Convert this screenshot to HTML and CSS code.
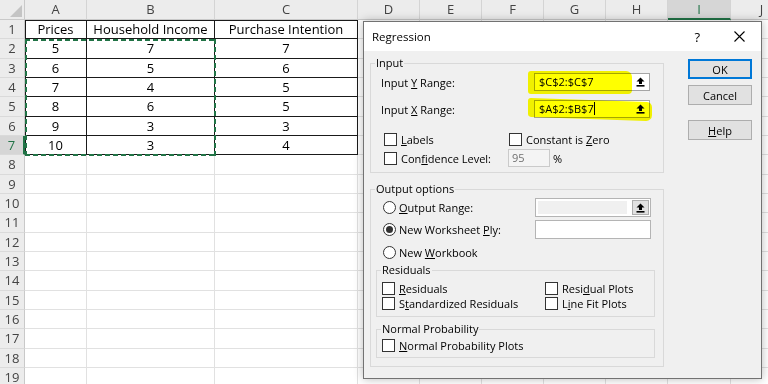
FILE: index.html
```html
<!DOCTYPE html>
<html>
<head>
<meta charset="utf-8">
<link rel="stylesheet" href="styles.css">
</head>
<body>
<div class="sheet">
  <div class="corner"><svg width="25" height="20" viewBox="0 0 25 20"><polygon points="10,17 22,17 22,5" fill="#c4c4c4"/></svg></div>
  <div class="ch">A</div><div class="ch">B</div><div class="ch">C</div><div class="ch">D</div><div class="ch">E</div><div class="ch">F</div><div class="ch">G</div><div class="ch">H</div><div class="ch sel">I</div><div class="ch">J</div>

  <div class="rh">1</div><div class="c t tl tt">Prices</div><div class="c t tt">Household Income</div><div class="c t tt">Purchase Intention</div><div class="c"></div><div class="c"></div><div class="c"></div><div class="c"></div><div class="c"></div><div class="c"></div><div class="c"></div>
  <div class="rh">2</div><div class="c t tl">5</div><div class="c t">7</div><div class="c t">7</div><div class="c"></div><div class="c"></div><div class="c"></div><div class="c"></div><div class="c"></div><div class="c"></div><div class="c"></div>
  <div class="rh">3</div><div class="c t tl">6</div><div class="c t">5</div><div class="c t">6</div><div class="c"></div><div class="c"></div><div class="c"></div><div class="c"></div><div class="c"></div><div class="c"></div><div class="c"></div>
  <div class="rh">4</div><div class="c t tl">7</div><div class="c t">4</div><div class="c t">5</div><div class="c"></div><div class="c"></div><div class="c"></div><div class="c"></div><div class="c"></div><div class="c"></div><div class="c"></div>
  <div class="rh">5</div><div class="c t tl">8</div><div class="c t">6</div><div class="c t">5</div><div class="c"></div><div class="c"></div><div class="c"></div><div class="c"></div><div class="c"></div><div class="c"></div><div class="c"></div>
  <div class="rh">6</div><div class="c t tl">9</div><div class="c t">3</div><div class="c t">3</div><div class="c"></div><div class="c"></div><div class="c"></div><div class="c"></div><div class="c"></div><div class="c"></div><div class="c"></div>
  <div class="rh sel">7</div><div class="c t tl">10</div><div class="c t">3</div><div class="c t">4</div><div class="c"></div><div class="c"></div><div class="c"></div><div class="c"></div><div class="c"></div><div class="c"></div><div class="c"></div>
  <div class="rh">8</div><div class="c"></div><div class="c"></div><div class="c"></div><div class="c"></div><div class="c"></div><div class="c"></div><div class="c"></div><div class="c"></div><div class="c"></div><div class="c"></div>
  <div class="rh">9</div><div class="c"></div><div class="c"></div><div class="c"></div><div class="c"></div><div class="c"></div><div class="c"></div><div class="c"></div><div class="c"></div><div class="c"></div><div class="c"></div>
  <div class="rh">10</div><div class="c"></div><div class="c"></div><div class="c"></div><div class="c"></div><div class="c"></div><div class="c"></div><div class="c"></div><div class="c"></div><div class="c"></div><div class="c"></div>
  <div class="rh">11</div><div class="c"></div><div class="c"></div><div class="c"></div><div class="c"></div><div class="c"></div><div class="c"></div><div class="c"></div><div class="c"></div><div class="c"></div><div class="c"></div>
  <div class="rh">12</div><div class="c"></div><div class="c"></div><div class="c"></div><div class="c"></div><div class="c"></div><div class="c"></div><div class="c"></div><div class="c"></div><div class="c"></div><div class="c"></div>
  <div class="rh">13</div><div class="c"></div><div class="c"></div><div class="c"></div><div class="c"></div><div class="c"></div><div class="c"></div><div class="c"></div><div class="c"></div><div class="c"></div><div class="c"></div>
  <div class="rh">14</div><div class="c"></div><div class="c"></div><div class="c"></div><div class="c"></div><div class="c"></div><div class="c"></div><div class="c"></div><div class="c"></div><div class="c"></div><div class="c"></div>
  <div class="rh">15</div><div class="c"></div><div class="c"></div><div class="c"></div><div class="c"></div><div class="c"></div><div class="c"></div><div class="c"></div><div class="c"></div><div class="c"></div><div class="c"></div>
  <div class="rh">16</div><div class="c"></div><div class="c"></div><div class="c"></div><div class="c"></div><div class="c"></div><div class="c"></div><div class="c"></div><div class="c"></div><div class="c"></div><div class="c"></div>
  <div class="rh">17</div><div class="c"></div><div class="c"></div><div class="c"></div><div class="c"></div><div class="c"></div><div class="c"></div><div class="c"></div><div class="c"></div><div class="c"></div><div class="c"></div>
  <div class="rh">18</div><div class="c"></div><div class="c"></div><div class="c"></div><div class="c"></div><div class="c"></div><div class="c"></div><div class="c"></div><div class="c"></div><div class="c"></div><div class="c"></div>
  <div class="rh">19</div><div class="c"></div><div class="c"></div><div class="c"></div><div class="c"></div><div class="c"></div><div class="c"></div><div class="c"></div><div class="c"></div><div class="c"></div><div class="c"></div>

  <div class="ants"></div>
</div>

<div class="dialog">
  <div class="titlebar">
    <span class="title">Regression</span>
    <span class="help-q">?</span>
    <svg class="close" width="11" height="11" viewBox="0 0 11 11"><path d="M0.5 0.5 L10.5 10.5 M10.5 0.5 L0.5 10.5" stroke="#000" stroke-width="1.1" fill="none"/></svg>
  </div>
  <div class="body">
    <div class="left">
      <div class="group g-input">
        <div class="gtitle">Input</div>
        <div class="frow r-y">
          <span class="flabel">Input <u>Y</u> Range:</span>
          <div class="range"><span class="val">$C$2:$C$7</span><span class="pick"><svg width="9" height="10" viewBox="0 0 9 10"><path d="M4.5 0.5 L8.5 4.5 H6 V7 H3 V4.5 H0.5 Z" fill="#000"/><rect x="0.5" y="8" width="8" height="1.6" fill="#000"/></svg></span></div>
        </div>
        <div class="frow r-x">
          <span class="flabel">Input <u>X</u> Range:</span>
          <div class="range"><span class="val">$A$2:$B$7<span class="caret"></span></span><span class="pick"><svg width="9" height="10" viewBox="0 0 9 10"><path d="M4.5 0.5 L8.5 4.5 H6 V7 H3 V4.5 H0.5 Z" fill="#000"/><rect x="0.5" y="8" width="8" height="1.6" fill="#000"/></svg></span></div>
        </div>
        <div class="crow c1">
          <span class="opt w125"><span class="box"></span><span class="lbl"><u>L</u>abels</span></span>
          <span class="opt"><span class="box"></span><span class="lbl">Constant is <u>Z</u>ero</span></span>
        </div>
        <div class="crow c2">
          <span class="opt w124"><span class="box"></span><span class="lbl">Con<u>f</u>idence Level:</span></span>
          <span class="conf">95</span><span class="pct">%</span>
        </div>
      </div>

      <div class="group g-output">
        <div class="gtitle">Output options</div>
        <div class="orow o1">
          <span class="opt w152"><span class="radio"></span><span class="lbl"><u>O</u>utput Range:</span></span>
          <div class="range dis"><span class="val"></span><span class="pick"><svg width="9" height="10" viewBox="0 0 9 10"><path d="M4.5 0.5 L8.5 4.5 H6 V7 H3 V4.5 H0.5 Z" fill="#000"/><rect x="0.5" y="8" width="8" height="1.6" fill="#000"/></svg></span></div>
        </div>
        <div class="orow o2">
          <span class="opt w152"><span class="radio on"></span><span class="lbl">New Worksheet <u>P</u>ly:</span></span>
          <div class="range plain"></div>
        </div>
        <div class="orow o3">
          <span class="opt"><span class="radio"></span><span class="lbl">New <u>W</u>orkbook</span></span>
        </div>

        <div class="group g-resid">
          <div class="gtitle">Residuals</div>
          <div class="srow s1">
            <span class="opt w163"><span class="box"></span><span class="lbl"><u>R</u>esiduals</span></span>
            <span class="opt"><span class="box"></span><span class="lbl">Resi<u>d</u>ual Plots</span></span>
          </div>
          <div class="srow">
            <span class="opt w163"><span class="box"></span><span class="lbl">S<u>t</u>andardized Residuals</span></span>
            <span class="opt"><span class="box"></span><span class="lbl">L<u>i</u>ne Fit Plots</span></span>
          </div>
        </div>

        <div class="group g-normal">
          <div class="gtitle">Normal Probability</div>
          <div class="srow s2">
            <span class="opt"><span class="box"></span><span class="lbl"><u>N</u>ormal Probability Plots</span></span>
          </div>
        </div>
      </div>
    </div>

    <div class="buttons">
      <button class="btn ok">OK</button>
      <button class="btn cancel">Cancel</button>
      <button class="btn helpb"><u>H</u>elp</button>
    </div>
  </div>

  <div class="mark mark-y"></div>
  <div class="mark mark-x"></div>
</div>
</body>
</html>
```

FILE: styles.css
```css
html, body {
  margin: 0;
  padding: 0;
}
body {
  width: 768px;
  height: 384px;
  overflow: hidden;
  background: #fff;
  position: relative;
  font-family: "Open Sans", "Noto Sans", sans-serif;
}

/* ---------- spreadsheet ---------- */
.sheet {
  position: relative;
  display: grid;
  grid-template-columns: 25px 62px 128px 143px 62px 62px 62px 62px 62px 63px 62px;
  grid-template-rows: 20px;
  grid-auto-rows: 19.33px;
  font-size: 13px;
  color: #000;
}
.corner {
  background: #ececec;
  border-right: 1px solid #c9c9c9;
  border-bottom: 1px solid #c9c9c9;
  box-sizing: border-box;
}
.corner svg { display: block; }
.ch {
  background: #ececec;
  border-right: 1px solid #d4d4d4;
  border-bottom: 1px solid #c9c9c9;
  box-sizing: border-box;
  color: #444;
  text-align: center;
  line-height: 19px;
  font-size: 13px;
}
.ch.sel {
  background: #d6d6d6;
  color: #217346;
  border-bottom: 2px solid #217346;
}
.rh {
  background: #ececec;
  border-right: 1px solid #c9c9c9;
  border-bottom: 1px solid #dadada;
  box-sizing: border-box;
  color: #444;
  text-align: center;
  line-height: 18px;
  font-size: 13px;
}
.rh.sel {
  background: #d6d6d6;
  color: #217346;
  border-right: 2px solid #217346;
}
.c {
  border-right: 1px solid #e1e1e1;
  border-bottom: 1px solid #e1e1e1;
  box-sizing: border-box;
  text-align: center;
  line-height: 18px;
  white-space: nowrap;
  overflow: hidden;
}
.c.t {
  border-right-color: #1a1a1a;
  border-bottom-color: #1a1a1a;
}
.c.tl { box-shadow: inset 1px 0 0 #1a1a1a; }
.c.tt { box-shadow: inset 0 1px 0 #1a1a1a; }
.c.tl.tt { box-shadow: inset 1px 1px 0 #1a1a1a; }

.ants {
  position: absolute;
  left: 25px;
  top: 39px;
  width: 191px;
  height: 117px;
  background:
    repeating-linear-gradient(90deg, #217346 0 5px, transparent 5px 8px) left top / 100% 2px no-repeat,
    repeating-linear-gradient(90deg, #217346 0 5px, transparent 5px 8px) left bottom / 100% 2px no-repeat,
    repeating-linear-gradient(180deg, #217346 0 5px, transparent 5px 8px) left top / 2px 100% no-repeat,
    repeating-linear-gradient(180deg, #217346 0 5px, transparent 5px 8px) right top / 2px 100% no-repeat;
}

/* ---------- dialog ---------- */
.dialog {
  position: absolute;
  left: 363px;
  top: 21px;
  width: 399px;
  height: 358px;
  box-sizing: border-box;
  border: 1px solid #727272;
  background: #f0f0f0;
  box-shadow: 0 0 9px rgba(0, 0, 0, 0.28);
  font-family: "Open Sans", "Noto Sans", sans-serif;
  font-size: 11px;
  color: #000;
  display: flex;
  flex-direction: column;
}
.titlebar {
  height: 29px;
  background: #fff;
  display: flex;
  align-items: center;
  padding: 0 16px 0 8px;
  flex-shrink: 0;
}
.title {
  font-size: 11.5px;
  flex: 1;
}
.help-q {
  font-size: 13px;
  margin-right: 34px;
}
.close { display: block; }

.body {
  flex: 1;
  display: flex;
  padding: 9px 0 0 6px;
}
.left {
  width: 294px;
  display: flex;
  flex-direction: column;
}

.group {
  border: 1px solid #d9d9d9;
  box-sizing: border-box;
}
.gtitle {
  margin: -8px 0 0 4px;
  padding: 0 1px;
  width: fit-content;
  line-height: 14px;
  height: 14px;
  background: #f0f0f0;
}
.g-input {
  margin-top: 3px;
  height: 110px;
}
.frow {
  display: flex;
  align-items: center;
  height: 18px;
  padding-left: 10px;
}
.r-y { margin-top: 3px; }
.r-x { margin-top: 9px; }
.flabel { width: 153px; white-space: nowrap; }

.range {
  width: 116px;
  height: 18px;
  box-sizing: border-box;
  border: 1px solid #a5a5a5;
  background: #fff;
  display: flex;
}
.val {
  flex: 1;
  padding-left: 4px;
  line-height: 16px;
  white-space: nowrap;
}
.caret {
  display: inline-block;
  width: 1px;
  height: 13px;
  background: #000;
  vertical-align: -2px;
}
.pick {
  width: 16px;
  margin: 0 1px 0 0;
  display: flex;
  align-items: center;
  justify-content: center;
  background: #fff;
}
.range.dis { height: 19px; border-color: #b4b4b4; }
.range.dis .val { background: #f0f0f0; margin: 2px 4px 2px 2px; }
.range.dis .pick {
  background: #e1e1e1;
  border: 1px solid #adadad;
  margin: 1px;
  width: 15px;
}
.range.plain { height: 19px; border-color: #b4b4b4; }

.crow {
  display: flex;
  align-items: center;
  height: 18px;
  padding-left: 13px;
}
.c1 { margin-top: 12px; }
.c2 { margin-top: 1px; }

.opt {
  display: flex;
  align-items: center;
  white-space: nowrap;
}
.lbl { white-space: pre; }
.w124 { width: 124px; }
.w125 { width: 125px; }
.w152 { width: 152px; }
.w163 { width: 163px; }

.box {
  width: 13px;
  height: 13px;
  box-sizing: border-box;
  border: 1px solid #333;
  background: #fff;
  margin-right: 4px;
  flex-shrink: 0;
}
.radio {
  width: 13px;
  height: 13px;
  box-sizing: border-box;
  border: 1px solid #333;
  border-radius: 50%;
  background: #fff;
  margin-right: 3px;
  flex-shrink: 0;
  display: flex;
  align-items: center;
  justify-content: center;
}
.radio.on::after {
  content: "";
  width: 7px;
  height: 7px;
  border-radius: 50%;
  background: #333;
}
.conf {
  width: 42px;
  height: 18px;
  box-sizing: border-box;
  border: 1px solid #cacaca;
  background: #f4f4f4;
  color: #707070;
  padding-left: 3px;
  line-height: 16px;
}
.pct { margin-left: 3px; }

.g-output {
  margin-top: 16px;
  height: 178px;
  padding-left: 5px;
}
.g-output > .gtitle { margin-left: -1px; }
.orow {
  display: flex;
  align-items: center;
  padding-left: 7px;
}
.o1 { margin-top: 2px; height: 19px; }
.o2 { margin-top: 3px; height: 19px; }
.o3 { margin-top: 4px; height: 18px; }

.g-resid {
  margin-top: 9px;
  width: 279px;
  height: 47px;
}
.g-normal {
  margin-top: 12px;
  width: 279px;
  height: 29px;
}
.srow {
  display: flex;
  align-items: center;
  height: 15px;
  padding-left: 5px;
}
.s1 { margin-top: 4px; }
.s2 { margin-top: 2px; }

.buttons {
  margin-left: 24px;
  margin-top: -1px;
  display: flex;
  flex-direction: column;
}
.btn {
  width: 64px;
  height: 20px;
  box-sizing: border-box;
  background: #e1e1e1;
  border: 1px solid #adadad;
  font-family: "Open Sans", "Noto Sans", sans-serif;
  font-size: 11px;
  color: #000;
  padding: 0;
  line-height: 17px;
}
.btn.ok {
  border: 1px solid #0078d7;
  box-shadow: inset 0 0 0 1px #0078d7;
}
.btn.cancel { margin-top: 6px; }
.btn.helpb { margin-top: 15px; }

.mark {
  position: absolute;
  background: #ffff00;
  mix-blend-mode: multiply;
}
.mark-y {
  left: 164px;
  top: 49px;
  width: 104px;
  height: 23px;
  border-radius: 3px 6px 4px 3px;
}
.mark-x {
  left: 164px;
  top: 78px;
  width: 124px;
  height: 19px;
  border-radius: 3px 5px 6px 3px;
  transform: skewY(2deg);
}
```
